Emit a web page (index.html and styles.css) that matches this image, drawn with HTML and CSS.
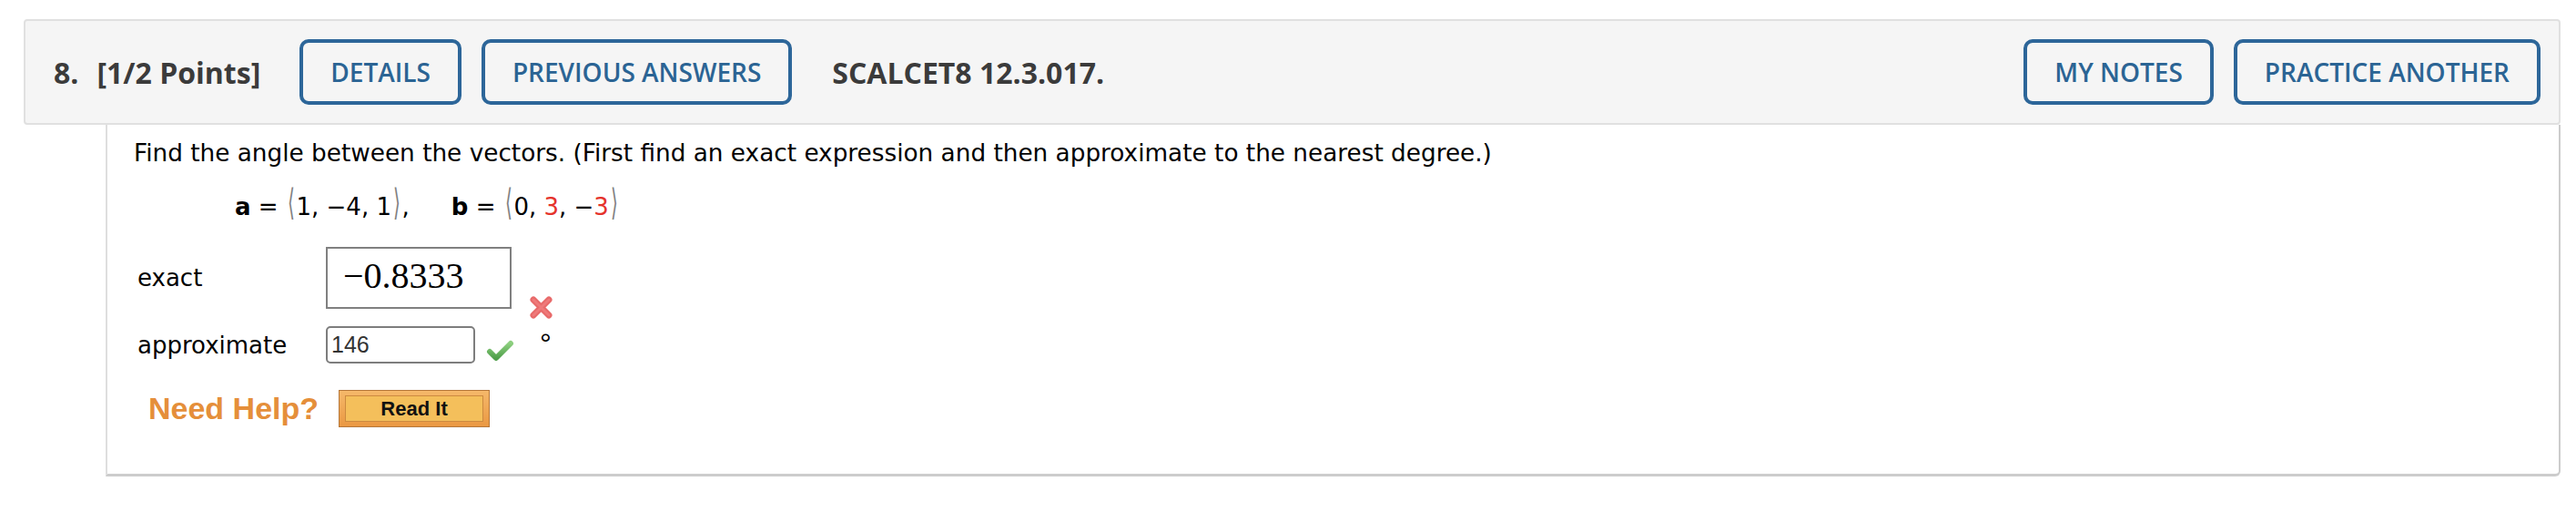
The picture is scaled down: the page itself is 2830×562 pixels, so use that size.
FILE: index.html
```html
<!DOCTYPE html>
<html lang="en">
<head>
<meta charset="utf-8">
<title>SCALCET8 12.3.017</title>
<link rel="stylesheet" href="styles.css">
</head>
<body>
<div class="page">
  <div class="q-header">
    <span class="q-num">8.</span>
    <span class="q-points">[1/2 Points]</span>
    <button class="hbtn">DETAILS</button>
    <button class="hbtn hbtn-gap">PREVIOUS ANSWERS</button>
    <span class="q-id">SCALCET8 12.3.017.</span>
    <span class="spacer"></span>
    <button class="hbtn">MY NOTES</button>
    <button class="hbtn hbtn-gap">PRACTICE ANOTHER</button>
  </div>
  <div class="q-body">
    <p class="prompt">Find the angle between the vectors. (First find an exact expression and then approximate to the nearest degree.)</p>
    <div class="vectors">
      <b class="var">a</b> = <span class="br">&#x27E8;</span>1, &minus;4, 1<span class="br">&#x27E9;</span>,<b class="var var-b">b</b> = <span class="br">&#x27E8;</span>0, <span class="red">3</span>, &minus;<span class="red">3</span><span class="br">&#x27E9;</span>
    </div>
    <div class="answers">
      <div class="row">
        <span class="label">exact</span>
        <span class="exact-box">&minus;0.8333</span>
        <svg class="icon-x" width="27" height="27" viewBox="0 0 27 27" aria-hidden="true">
          <path d="M5 5 L22 22 M22 5 L5 22" stroke="#e65a5a" stroke-width="7" stroke-linecap="round" fill="none" opacity="0.9"/>
          <path d="M5 5 L22 22 M22 5 L5 22" stroke="#ef7b7b" stroke-width="2.5" stroke-linecap="round" fill="none"/>
        </svg>
      </div>
      <div class="row row-approx">
        <span class="label">approximate</span>
        <span class="approx-input">146</span>
        <svg class="icon-check" width="31" height="25" viewBox="0 0 31 25" aria-hidden="true">
          <defs>
            <linearGradient id="cg" x1="0" y1="0" x2="0" y2="1">
              <stop offset="0" stop-color="#8dcf7f"/>
              <stop offset="1" stop-color="#4f9f4a"/>
            </linearGradient>
          </defs>
          <path d="M4 14 L11 21 L27 5" stroke="url(#cg)" stroke-width="6" stroke-linecap="round" stroke-linejoin="round" fill="none"/>
        </svg>
        <span class="deg">&deg;</span>
      </div>
    </div>
    <div class="help">
      <span class="need-help">Need Help?</span>
      <span class="read-it"><span class="read-it-inner">Read It</span></span>
    </div>
  </div>
</div>
</body>
</html>
```

FILE: styles.css
```css
html, body {
  margin: 0;
  padding: 0;
  background: #ffffff;
}

.page {
  padding: 21px 17px 0 26px;
}

.q-header {
  display: flex;
  align-items: center;
  height: 116px;
  box-sizing: border-box;
  background: #f5f5f5;
  border: 2px solid #e0e0e0;
  border-radius: 4px;
  padding: 0 20px 0 31px;
  font-family: "Open Sans", "Liberation Sans", sans-serif;
  color: #3b3b3b;
}

.q-num,
.q-points,
.q-id {
  font-size: 32px;
  font-weight: 700;
  white-space: nowrap;
}

.q-num { margin-right: 20px; }
.q-points { margin-right: 43px; }
.q-id { margin-left: 44px; }

.spacer { flex: 1; }

.hbtn {
  height: 72px;
  box-sizing: border-box;
  border: 4px solid #2d6699;
  border-radius: 10px;
  background: transparent;
  padding: 0 30px;
  font-family: "Open Sans", "Liberation Sans", sans-serif;
  font-size: 28px;
  font-weight: 600;
  color: #2b6494;
  white-space: nowrap;
}

.hbtn-gap { margin-left: 22px; }

.q-body {
  margin-left: 90px;
  border-left: 2px solid #dedede;
  border-right: 2px solid #cccccc;
  border-bottom: 3px solid #cccccc;
  border-bottom-right-radius: 6px;
  padding: 16px 0 51px 29px;
  font-family: "DejaVu Sans", Verdana, sans-serif;
  font-size: 26px;
  color: #000;
}

.prompt {
  margin: 0;
  font-size: 26.3px;
  line-height: 30px;
}

.vectors {
  margin: 19px 0 0 111px;
  height: 40px;
  line-height: 40px;
  white-space: nowrap;
}

.var { font-weight: 700; }
.var-b { margin-left: 46px; }

.br {
  font-size: 40px;
  line-height: 1;
  color: #808080;
  display: inline-block;
  transform: scaleX(0.5);
  margin: 0 -2px;
}

.red { color: #e5322b; }

.answers {
  margin: 29px 0 0 4px;
  display: flex;
  flex-direction: column;
  gap: 19px;
}

.row {
  display: flex;
  align-items: center;
  height: 68px;
}

.row-approx { height: 41px; }

.label {
  width: 207px;
  flex: none;
}

.exact-box {
  box-sizing: border-box;
  width: 204px;
  height: 68px;
  border: 2px solid #808080;
  padding: 0 0 6px 17px;
  display: flex;
  align-items: center;
  font-family: "Liberation Serif", "Times New Roman", serif;
  font-size: 40px;
}

.icon-x {
  align-self: flex-start;
  margin: 53px 0 -12px 19px;
}

.approx-input {
  box-sizing: border-box;
  width: 164px;
  height: 41px;
  border: 2px solid #7d7d7d;
  border-radius: 5px;
  padding: 0 0 0 4px;
  display: flex;
  align-items: center;
  font-family: "Liberation Sans", Arial, sans-serif;
  font-size: 25px;
  color: #333;
}

.icon-check {
  align-self: flex-end;
  margin: 0 0 2px 12px;
}

.deg {
  align-self: flex-start;
  margin: 4px 0 0 28px;
  font-family: "Liberation Sans", Arial, sans-serif;
  font-size: 32px;
  line-height: 30px;
}

.help {
  display: flex;
  align-items: center;
  margin: 29px 0 0 16px;
  height: 41px;
}

.need-help {
  font-family: "Liberation Sans", Arial, sans-serif;
  font-weight: 700;
  font-size: 34px;
  color: #e58f3a;
  margin-right: 22px;
}

.read-it {
  box-sizing: border-box;
  width: 166px;
  height: 41px;
  padding: 5px 6px;
  background: linear-gradient(#f5b86a, #ea9842);
  border: 1px solid #b5773a;
  display: flex;
}

.read-it-inner {
  flex: 1;
  display: flex;
  align-items: center;
  justify-content: center;
  background: #f4bf5b;
  border: 1px solid #cc8a40;
  font-family: "Liberation Sans", Arial, sans-serif;
  font-weight: 700;
  font-size: 22px;
  color: #111;
}
```
